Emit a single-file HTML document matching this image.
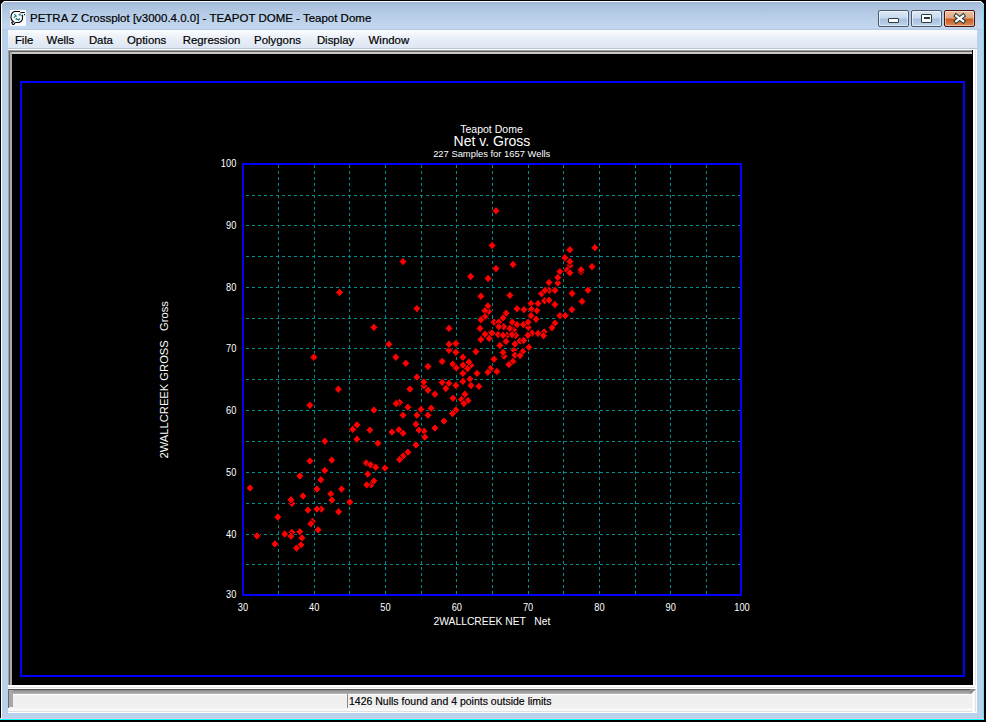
<!DOCTYPE html>
<html><head><meta charset="utf-8"><style>
*{margin:0;padding:0;box-sizing:border-box}
html,body{width:986px;height:722px;overflow:hidden;background:#000}
body{position:relative;font-family:"Liberation Sans",sans-serif}
.abs{position:absolute}
#frame{left:0;top:0;width:984px;height:720px;background:#b9d1ea;border-left:1px solid #000;border-top:1px solid #000}
#tbtxt{left:30px;top:10px;font-size:11.5px;color:#000;white-space:nowrap;line-height:17px;-webkit-text-stroke:0.2px #000}
#menu{left:8px;top:30px;width:969px;height:18px;background:linear-gradient(#fbfcfe,#e9eff8 50%,#dde6f3)}
.mi{position:absolute;top:1.6px;font-size:11.4px;color:#000;line-height:17px;white-space:nowrap;-webkit-text-stroke:0.2px #000}
#client{left:8px;top:49px;width:969px;height:640px;background:#000}
#status{left:8px;top:689px;width:969px;height:23px;background:#f0f0f0}
</style></head><body>
<div class="abs" id="frame"></div>
<div class="abs" style="left:1px;top:2px;width:983px;height:28px;background:linear-gradient(#9db6d3 0px,#a9c0dc 3px,#b6cce6 12px,#bdd3ec 20px,#c3d8ef 26px,#b0c8e4 28px)"></div>
<div class="abs" style="left:1px;top:1px;width:983px;height:1px;background:#fff"></div>
<div class="abs" style="left:1px;top:1px;width:1px;height:718px;background:#fff"></div>
<div class="abs" style="left:983px;top:1px;width:1px;height:719px;background:#6fd7f0"></div>
<div class="abs" style="left:0;top:718px;width:984px;height:1px;background:#e8c8d8"></div>
<div class="abs" style="left:0;top:719px;width:984px;height:1px;background:#00ffff"></div>
<div class="abs" style="left:10px;top:10px;width:16px;height:16px;background:#fbfbfb"></div>
<svg class="abs" style="left:10px;top:10px" width="16" height="16" viewBox="0 0 16 16">
<path d="M10 1.5H4.5L2.6 2.5L1.4 4.5L0.9 7.5L1.6 10L3.6 11.8L1.7 12.6L2.7 14.5H3.9L4.8 13L6 12.4H9.2L11.2 11.3L12.4 9.3L12.6 4.8M10.3 3L12 2.4H14.8M14.6 4V5.2" fill="none" stroke="#000" stroke-width="1.05"/>
<path d="M4.2 4.2L6.2 6.2L3.6 7.4M7.2 8.2L5.6 9.2M8.5 4.8H10.8M9.8 3.8V5.5M6.2 8.8L8.4 10L9.8 8.5M11 5.5L12.6 6" fill="none" stroke="#0a7a7a" stroke-width="1.1"/>
</svg>
<svg class="abs" style="left:0;top:0" width="986" height="8"><path d="M0 0H5L0 5Z" fill="#000"/><path d="M4.5 1.5L1.5 4.5" stroke="#fff" stroke-width="1"/><path d="M986 0H980L986 6Z" fill="#000"/><path d="M980.5 1.5L983.5 4.5" stroke="#fff" stroke-width="1"/></svg>
<div class="abs" id="tbtxt">PETRA Z Crossplot [v3000.4.0.0] - TEAPOT DOME - Teapot Dome</div>
<div class="abs" id="menu"><span class="mi" style="left:6.9px">File</span><span class="mi" style="left:38.6px">Wells</span><span class="mi" style="left:80.9px">Data</span><span class="mi" style="left:119.0px">Options</span><span class="mi" style="left:174.7px">Regression</span><span class="mi" style="left:246.1px">Polygons</span><span class="mi" style="left:308.9px">Display</span><span class="mi" style="left:360.6px">Window</span></div>
<div class="abs" style="left:8px;top:48px;width:969px;height:1px;background:#b8c4d4"></div>
<div class="abs" id="client"></div>
<div class="abs" style="left:8px;top:49px;width:969px;height:1px;background:#fff"></div>
<div class="abs" style="left:8px;top:50px;width:964px;height:1px;background:#a0a0a0"></div>
<div class="abs" style="left:8px;top:51px;width:964px;height:1px;background:#606060"></div>
<div class="abs" style="left:10px;top:52px;width:962px;height:2px;background:#c8c8c8"></div>
<div class="abs" style="left:8px;top:50px;width:1px;height:635px;background:#a0a0a0"></div>
<div class="abs" style="left:9px;top:51px;width:1px;height:634px;background:#646464"></div>
<div class="abs" style="left:10px;top:52px;width:2px;height:633px;background:#aaaaaa"></div>
<div class="abs" style="left:973px;top:50px;width:4px;height:639px;background:#fff"></div>
<div class="abs" style="left:975px;top:50px;width:1px;height:639px;background:#e4e4e4"></div>
<div class="abs" style="left:8px;top:685px;width:969px;height:4px;background:#fff"></div>
<div class="abs" style="left:8px;top:687px;width:967px;height:1px;background:#e4e4e4"></div>
<div class="abs" id="status"></div>
<div class="abs" style="left:8px;top:689px;width:963px;height:1px;background:#555"></div>
<div class="abs" style="left:8px;top:690px;width:962px;height:4px;background:linear-gradient(#8c8c8c,#b4b4b4)"></div>
<div class="abs" style="left:8px;top:689px;width:1px;height:19px;background:#6a6a6a"></div><div class="abs" style="left:9px;top:690px;width:4px;height:17px;background:#a8a8a8"></div>
<div class="abs" style="left:13px;top:694px;width:959px;height:1px;background:#fff"></div>
<div class="abs" style="left:8px;top:708px;width:969px;height:4px;background:#f8f8f8"></div>
<div class="abs" style="left:8px;top:711px;width:969px;height:1px;background:#e0e0e0"></div>
<div class="abs" style="left:8px;top:712px;width:969px;height:1px;background:#fff"></div>
<div class="abs" style="left:972px;top:689px;width:5px;height:23px;background:#fafafa"></div><div class="abs" style="left:975px;top:689px;width:1px;height:23px;background:#e2e2e2"></div>
<svg class="abs" style="left:970px;top:689px" width="6" height="5"><path d="M0 0H6L1 5H0Z" fill="#8c8c8c"/></svg>
<div class="abs" style="left:347px;top:694px;width:1px;height:14px;background:#8a8a8a"></div>
<div class="abs" style="left:349px;top:694px;font-size:10.5px;line-height:14px;color:#000;white-space:nowrap;-webkit-text-stroke:0.15px #000">1426 Nulls found and 4 points outside limits</div>
<svg class="abs" style="left:0;top:0" width="986" height="722">
<path d="M278.5 165V594 M314.5 165V594 M349.5 165V594 M385.5 165V594 M421.5 165V594 M456.5 165V594 M492.5 165V594 M528.5 165V594 M563.5 165V594 M599.5 165V594 M635.5 165V594 M670.5 165V594 M706.5 165V594" stroke="#008e90" stroke-width="1" stroke-dasharray="3 3" fill="none" shape-rendering="crispEdges"/>
<path d="M244 195.5H740 M244 225.5H740 M244 256.5H740 M244 287.5H740 M244 318.5H740 M244 348.5H740 M244 379.5H740 M244 410.5H740 M244 441.5H740 M244 472.5H740 M244 503.5H740 M244 534.5H740 M244 564.5H740" stroke="#008e90" stroke-width="1" stroke-dasharray="3 3" stroke-dashoffset="4" fill="none" shape-rendering="crispEdges"/>
<rect x="21" y="82" width="943" height="594" fill="none" stroke="#0000ff" stroke-width="2" shape-rendering="crispEdges"/>
<rect x="243" y="164" width="498" height="431" fill="none" stroke="#0000ff" stroke-width="2" shape-rendering="crispEdges"/>
<g fill="#ff0000" stroke="#000" stroke-width="0.9"><path d="M291.9 499.2L295.8 503.4L291.9 507.6L288.0 503.4Z"/><path d="M321.4 504.9L325.3 509.1L321.4 513.3L317.5 509.1Z"/><path d="M312.3 517.2L316.2 521.4L312.3 525.6L308.4 521.4Z"/><path d="M291.9 528.2L295.8 532.4L291.9 536.6L288.0 532.4Z"/><path d="M399.6 398.3L403.5 402.5L399.6 406.7L395.7 402.5Z"/><path d="M424.1 427.0L428.0 431.2L424.1 435.4L420.2 431.2Z"/><path d="M371.2 480.6L375.1 484.8L371.2 489.0L367.3 484.8Z"/><path d="M423.8 381.7L427.7 385.9L423.8 390.1L419.9 385.9Z"/><path d="M470.9 361.2L474.8 365.4L470.9 369.6L467.0 365.4Z"/><path d="M490.5 364.4L494.4 368.6L490.5 372.8L486.6 368.6Z"/><path d="M461.5 395.3L465.4 399.5L461.5 403.7L457.6 399.5Z"/><path d="M468.0 396.4L471.9 400.6L468.0 404.8L464.1 400.6Z"/><path d="M504.1 352.0L508.0 356.2L504.1 360.4L500.2 356.2Z"/><path d="M522.7 347.3L526.6 351.5L522.7 355.7L518.8 351.5Z"/><path d="M488.8 307.2L492.7 311.4L488.8 315.6L484.9 311.4Z"/><path d="M489.5 329.7L493.4 333.9L489.5 338.1L485.6 333.9Z"/><path d="M494.0 318.0L497.9 322.2L494.0 326.4L490.1 322.2Z"/><path d="M498.8 318.0L502.7 322.2L498.8 326.4L494.9 322.2Z"/><path d="M503.7 322.5L507.6 326.7L503.7 330.9L499.8 326.7Z"/><path d="M528.2 323.2L532.1 327.4L528.2 331.6L524.3 327.4Z"/><path d="M513.7 325.9L517.6 330.1L513.7 334.3L509.8 330.1Z"/><path d="M498.1 330.4L502.0 334.6L498.1 338.8L494.2 334.6Z"/><path d="M507.1 331.1L511.0 335.3L507.1 339.5L503.2 335.3Z"/><path d="M515.8 331.1L519.7 335.3L515.8 339.5L511.9 335.3Z"/><path d="M519.9 336.7L523.8 340.9L519.9 345.1L516.0 340.9Z"/><path d="M532.1 329.0L536.0 333.2L532.1 337.4L528.2 333.2Z"/><path d="M544.5 296.6L548.4 300.8L544.5 305.0L540.6 300.8Z"/><path d="M544.2 327.7L548.1 331.9L544.2 336.1L540.3 331.9Z"/><path d="M569.9 261.3L573.8 265.5L569.9 269.7L566.0 265.5Z"/><path d="M567.2 265.8L571.1 270.0L567.2 274.2L563.3 270.0Z"/><path d="M581.0 267.6L584.9 271.8L581.0 276.0L577.1 271.8Z"/><path d="M557.8 278.8L561.7 283.0L557.8 287.2L553.9 283.0Z"/><path d="M549.2 286.2L553.1 290.4L549.2 294.6L545.3 290.4Z"/><path d="M541.5 289.5L545.4 293.7L541.5 297.9L537.6 293.7Z"/><path d="M250.0 483.8L253.9 488.0L250.0 492.2L246.1 488.0Z"/><path d="M299.8 471.8L303.7 476.0L299.8 480.2L295.9 476.0Z"/><path d="M324.8 466.2L328.7 470.4L324.8 474.6L320.9 470.4Z"/><path d="M320.8 475.6L324.7 479.8L320.8 484.0L316.9 479.8Z"/><path d="M316.9 484.9L320.8 489.1L316.9 493.3L313.0 489.1Z"/><path d="M303.0 491.8L306.9 496.0L303.0 500.2L299.1 496.0Z"/><path d="M291.0 495.6L294.9 499.8L291.0 504.0L287.1 499.8Z"/><path d="M330.7 489.8L334.6 494.0L330.7 498.2L326.8 494.0Z"/><path d="M341.5 484.9L345.4 489.1L341.5 493.3L337.6 489.1Z"/><path d="M331.9 495.9L335.8 500.1L331.9 504.3L328.0 500.1Z"/><path d="M307.9 505.9L311.8 510.1L307.9 514.3L304.0 510.1Z"/><path d="M316.9 504.9L320.8 509.1L316.9 513.3L313.0 509.1Z"/><path d="M338.6 507.6L342.5 511.8L338.6 516.0L334.7 511.8Z"/><path d="M277.8 512.9L281.7 517.1L277.8 521.3L273.9 517.1Z"/><path d="M310.9 519.5L314.8 523.7L310.9 527.9L307.0 523.7Z"/><path d="M318.0 525.6L321.9 529.8L318.0 534.0L314.1 529.8Z"/><path d="M256.9 531.7L260.8 535.9L256.9 540.1L253.0 535.9Z"/><path d="M284.7 529.8L288.6 534.0L284.7 538.2L280.8 534.0Z"/><path d="M291.0 532.0L294.9 536.2L291.0 540.4L287.1 536.2Z"/><path d="M299.8 527.6L303.7 531.8L299.8 536.0L295.9 531.8Z"/><path d="M301.9 533.7L305.8 537.9L301.9 542.1L298.0 537.9Z"/><path d="M274.9 539.7L278.8 543.9L274.9 548.1L271.0 543.9Z"/><path d="M301.0 540.7L304.9 544.9L301.0 549.1L297.1 544.9Z"/><path d="M296.5 543.9L300.4 548.1L296.5 552.3L292.6 548.1Z"/><path d="M349.8 497.9L353.7 502.1L349.8 506.3L345.9 502.1Z"/><path d="M338.3 385.0L342.2 389.2L338.3 393.4L334.4 389.2Z"/><path d="M309.9 401.1L313.8 405.3L309.9 409.5L306.0 405.3Z"/><path d="M324.8 437.0L328.7 441.2L324.8 445.4L320.9 441.2Z"/><path d="M309.9 456.8L313.8 461.0L309.9 465.2L306.0 461.0Z"/><path d="M331.7 455.9L335.6 460.1L331.7 464.3L327.8 460.1Z"/><path d="M339.5 288.3L343.4 292.5L339.5 296.7L335.6 292.5Z"/><path d="M313.8 353.1L317.7 357.3L313.8 361.5L309.9 357.3Z"/><path d="M396.1 399.3L400.0 403.5L396.1 407.7L392.2 403.5Z"/><path d="M407.9 403.0L411.8 407.2L407.9 411.4L404.0 407.2Z"/><path d="M373.9 405.9L377.8 410.1L373.9 414.3L370.0 410.1Z"/><path d="M421.0 405.2L424.9 409.4L421.0 413.6L417.1 409.4Z"/><path d="M431.1 404.1L435.0 408.3L431.1 412.5L427.2 408.3Z"/><path d="M403.0 411.0L406.9 415.2L403.0 419.4L399.1 415.2Z"/><path d="M416.9 411.0L420.8 415.2L416.9 419.4L413.0 415.2Z"/><path d="M428.0 411.0L431.9 415.2L428.0 419.4L424.1 415.2Z"/><path d="M356.9 420.7L360.8 424.9L356.9 429.1L353.0 424.9Z"/><path d="M352.7 425.2L356.6 429.4L352.7 433.6L348.8 429.4Z"/><path d="M369.8 425.9L373.7 430.1L369.8 434.3L365.9 430.1Z"/><path d="M391.9 427.9L395.8 432.1L391.9 436.3L388.0 432.1Z"/><path d="M398.9 425.6L402.8 429.8L398.9 434.0L395.0 429.8Z"/><path d="M403.0 429.0L406.9 433.2L403.0 437.4L399.1 433.2Z"/><path d="M415.9 420.0L419.8 424.2L415.9 428.4L412.0 424.2Z"/><path d="M418.9 425.9L422.8 430.1L418.9 434.3L415.0 430.1Z"/><path d="M434.9 423.9L438.8 428.1L434.9 432.3L431.0 428.1Z"/><path d="M424.9 432.9L428.8 437.1L424.9 441.3L421.0 437.1Z"/><path d="M356.9 435.0L360.8 439.2L356.9 443.4L353.0 439.2Z"/><path d="M377.8 439.0L381.7 443.2L377.8 447.4L373.9 443.2Z"/><path d="M415.9 440.8L419.8 445.0L415.9 449.2L412.0 445.0Z"/><path d="M407.9 448.0L411.8 452.2L407.9 456.4L404.0 452.2Z"/><path d="M403.0 451.9L406.9 456.1L403.0 460.3L399.1 456.1Z"/><path d="M399.6 455.4L403.5 459.6L399.6 463.8L395.7 459.6Z"/><path d="M366.3 458.8L370.2 463.0L366.3 467.2L362.4 463.0Z"/><path d="M370.5 460.6L374.4 464.8L370.5 469.0L366.6 464.8Z"/><path d="M375.7 463.0L379.6 467.2L375.7 471.4L371.8 467.2Z"/><path d="M385.0 463.9L388.9 468.1L385.0 472.3L381.1 468.1Z"/><path d="M367.7 469.9L371.6 474.1L367.7 478.3L363.8 474.1Z"/><path d="M373.9 476.8L377.8 481.0L373.9 485.2L370.0 481.0Z"/><path d="M366.7 480.7L370.6 484.9L366.7 489.1L362.8 484.9Z"/><path d="M416.9 304.4L420.8 308.6L416.9 312.8L413.0 308.6Z"/><path d="M373.9 323.2L377.8 327.4L373.9 331.6L370.0 327.4Z"/><path d="M388.9 340.1L392.8 344.3L388.9 348.5L385.0 344.3Z"/><path d="M395.8 353.0L399.7 357.2L395.8 361.4L391.9 357.2Z"/><path d="M405.8 359.1L409.7 363.3L405.8 367.5L401.9 363.3Z"/><path d="M428.0 362.3L431.9 366.5L428.0 370.7L424.1 366.5Z"/><path d="M416.9 372.9L420.8 377.1L416.9 381.3L413.0 377.1Z"/><path d="M423.8 377.8L427.7 382.0L423.8 386.2L419.9 382.0Z"/><path d="M409.9 384.9L413.8 389.1L409.9 393.3L406.0 389.1Z"/><path d="M428.0 386.1L431.9 390.3L428.0 394.5L424.1 390.3Z"/><path d="M434.9 390.0L438.8 394.2L434.9 398.4L431.0 394.2Z"/><path d="M403.0 257.4L406.9 261.6L403.0 265.8L399.1 261.6Z"/><path d="M463.9 399.3L467.8 403.5L463.9 407.7L460.0 403.5Z"/><path d="M455.9 405.8L459.8 410.0L455.9 414.2L452.0 410.0Z"/><path d="M452.5 409.4L456.4 413.6L452.5 417.8L448.6 413.6Z"/><path d="M443.9 416.9L447.8 421.1L443.9 425.3L440.0 421.1Z"/><path d="M449.0 346.1L452.9 350.3L449.0 354.5L445.1 350.3Z"/><path d="M455.9 348.1L459.8 352.3L455.9 356.5L452.0 352.3Z"/><path d="M475.9 347.4L479.8 351.6L475.9 355.8L472.0 351.6Z"/><path d="M462.9 353.1L466.8 357.3L462.9 361.5L459.0 357.3Z"/><path d="M442.1 357.2L446.0 361.4L442.1 365.6L438.2 361.4Z"/><path d="M452.8 360.0L456.7 364.2L452.8 368.4L448.9 364.2Z"/><path d="M456.3 363.7L460.2 367.9L456.3 372.1L452.4 367.9Z"/><path d="M462.9 361.0L466.8 365.2L462.9 369.4L459.0 365.2Z"/><path d="M468.9 357.9L472.8 362.1L468.9 366.3L465.0 362.1Z"/><path d="M467.4 364.5L471.3 368.7L467.4 372.9L463.5 368.7Z"/><path d="M462.9 369.2L466.8 373.4L462.9 377.6L459.0 373.4Z"/><path d="M477.0 369.2L480.9 373.4L477.0 377.6L473.1 373.4Z"/><path d="M487.9 368.1L491.8 372.3L487.9 376.5L484.0 372.3Z"/><path d="M442.1 378.2L446.0 382.4L442.1 386.6L438.2 382.4Z"/><path d="M448.9 379.1L452.8 383.3L448.9 387.5L445.0 383.3Z"/><path d="M445.9 384.3L449.8 388.5L445.9 392.7L442.0 388.5Z"/><path d="M455.9 381.3L459.8 385.5L455.9 389.7L452.0 385.5Z"/><path d="M462.9 377.2L466.8 381.4L462.9 385.6L459.0 381.4Z"/><path d="M469.9 374.9L473.8 379.1L469.9 383.3L466.0 379.1Z"/><path d="M471.0 381.3L474.9 385.5L471.0 389.7L467.1 385.5Z"/><path d="M478.9 382.2L482.8 386.4L478.9 390.6L475.0 386.4Z"/><path d="M464.9 390.1L468.8 394.3L464.9 398.5L461.0 394.3Z"/><path d="M453.0 394.0L456.9 398.2L453.0 402.4L449.1 398.2Z"/><path d="M503.0 348.2L506.9 352.4L503.0 356.6L499.1 352.4Z"/><path d="M514.0 346.0L517.9 350.2L514.0 354.4L510.1 350.2Z"/><path d="M514.9 351.0L518.8 355.2L514.9 359.4L511.0 355.2Z"/><path d="M520.1 351.3L524.0 355.5L520.1 359.7L516.2 355.5Z"/><path d="M494.0 355.1L497.9 359.3L494.0 363.5L490.1 359.3Z"/><path d="M513.0 357.2L516.9 361.4L513.0 365.6L509.1 361.4Z"/><path d="M508.9 360.3L512.8 364.5L508.9 368.7L505.0 364.5Z"/><path d="M496.9 367.3L500.8 371.5L496.9 375.7L493.0 371.5Z"/><path d="M487.8 301.7L491.7 305.9L487.8 310.1L483.9 305.9Z"/><path d="M484.9 306.5L488.8 310.7L484.9 314.9L481.0 310.7Z"/><path d="M485.0 312.4L488.9 316.6L485.0 320.8L481.1 316.6Z"/><path d="M480.9 315.5L484.8 319.7L480.9 323.9L477.0 319.7Z"/><path d="M449.0 324.2L452.9 328.4L449.0 332.6L445.1 328.4Z"/><path d="M480.0 324.2L483.9 328.4L480.0 332.6L476.1 328.4Z"/><path d="M485.0 330.1L488.9 334.3L485.0 338.5L481.1 334.3Z"/><path d="M480.9 335.3L484.8 339.5L480.9 343.7L477.0 339.5Z"/><path d="M489.2 334.2L493.1 338.4L489.2 342.6L485.3 338.4Z"/><path d="M449.0 340.1L452.9 344.3L449.0 348.5L445.1 344.3Z"/><path d="M455.9 339.3L459.8 343.5L455.9 347.7L452.0 343.5Z"/><path d="M506.1 309.0L510.0 313.2L506.1 317.4L502.2 313.2Z"/><path d="M503.0 313.7L506.9 317.9L503.0 322.1L499.1 317.9Z"/><path d="M517.0 304.5L520.9 308.7L517.0 312.9L513.1 308.7Z"/><path d="M524.0 305.4L527.9 309.6L524.0 313.8L520.1 309.6Z"/><path d="M531.0 299.3L534.9 303.5L531.0 307.7L527.1 303.5Z"/><path d="M531.4 305.1L535.3 309.3L531.4 313.5L527.5 309.3Z"/><path d="M531.0 311.4L534.9 315.6L531.0 319.8L527.1 315.6Z"/><path d="M498.8 322.5L502.7 326.7L498.8 330.9L494.9 326.7Z"/><path d="M512.3 318.0L516.2 322.2L512.3 326.4L508.4 322.2Z"/><path d="M517.0 320.4L520.9 324.6L517.0 328.8L513.1 324.6Z"/><path d="M523.4 320.4L527.3 324.6L523.4 328.8L519.5 324.6Z"/><path d="M528.1 318.0L532.0 322.2L528.1 326.4L524.2 322.2Z"/><path d="M509.9 324.2L513.8 328.4L509.9 332.6L506.0 328.4Z"/><path d="M491.9 328.7L495.8 332.9L491.9 337.1L488.0 332.9Z"/><path d="M503.0 331.1L506.9 335.3L503.0 339.5L499.1 335.3Z"/><path d="M512.0 330.4L515.9 334.6L512.0 338.8L508.1 334.6Z"/><path d="M506.1 337.2L510.0 341.4L506.1 345.6L502.2 341.4Z"/><path d="M499.9 341.2L503.8 345.4L499.9 349.6L496.0 345.4Z"/><path d="M514.9 339.8L518.8 344.0L514.9 348.2L511.0 344.0Z"/><path d="M523.7 336.3L527.6 340.5L523.7 344.7L519.8 340.5Z"/><path d="M527.9 331.1L531.8 335.3L527.9 339.5L524.0 335.3Z"/><path d="M528.9 343.1L532.8 347.3L528.9 351.5L525.0 347.3Z"/><path d="M538.0 299.4L541.9 303.6L538.0 307.8L534.1 303.6Z"/><path d="M536.9 306.4L540.8 310.6L536.9 314.8L533.0 310.6Z"/><path d="M536.1 315.0L540.0 319.2L536.1 323.4L532.2 319.2Z"/><path d="M549.0 296.0L552.9 300.2L549.0 304.4L545.1 300.2Z"/><path d="M554.9 300.3L558.8 304.5L554.9 308.7L551.0 304.5Z"/><path d="M571.9 305.4L575.8 309.6L571.9 313.8L568.0 309.6Z"/><path d="M559.9 311.4L563.8 315.6L559.9 319.8L556.0 315.6Z"/><path d="M565.3 311.4L569.2 315.6L565.3 319.8L561.4 315.6Z"/><path d="M554.9 319.0L558.8 323.2L554.9 327.4L551.0 323.2Z"/><path d="M552.0 323.5L555.9 327.7L552.0 331.9L548.1 327.7Z"/><path d="M538.0 329.3L541.9 333.5L538.0 337.7L534.1 333.5Z"/><path d="M543.5 331.5L547.4 335.7L543.5 339.9L539.6 335.7Z"/><path d="M513.0 260.3L516.9 264.5L513.0 268.7L509.1 264.5Z"/><path d="M496.0 264.4L499.9 268.6L496.0 272.8L492.1 268.6Z"/><path d="M488.0 274.3L491.9 278.5L488.0 282.7L484.1 278.5Z"/><path d="M509.9 291.2L513.8 295.4L509.9 299.6L506.0 295.4Z"/><path d="M470.7 272.3L474.6 276.5L470.7 280.7L466.8 276.5Z"/><path d="M480.9 292.1L484.8 296.3L480.9 300.5L477.0 296.3Z"/><path d="M496.0 206.6L499.9 210.8L496.0 215.0L492.1 210.8Z"/><path d="M492.1 241.3L496.0 245.5L492.1 249.7L488.2 245.5Z"/><path d="M569.9 245.5L573.8 249.7L569.9 253.9L566.0 249.7Z"/><path d="M564.9 253.5L568.8 257.7L564.9 261.9L561.0 257.7Z"/><path d="M569.9 257.4L573.8 261.6L569.9 265.8L566.0 261.6Z"/><path d="M569.9 268.6L573.8 272.8L569.9 277.0L566.0 272.8Z"/><path d="M581.0 265.5L584.9 269.7L581.0 273.9L577.1 269.7Z"/><path d="M559.9 267.4L563.8 271.6L559.9 275.8L556.0 271.6Z"/><path d="M557.8 273.3L561.7 277.5L557.8 281.7L553.9 277.5Z"/><path d="M549.0 278.3L552.9 282.5L549.0 286.7L545.1 282.5Z"/><path d="M545.0 286.2L548.9 290.4L545.0 294.6L541.1 290.4Z"/><path d="M555.0 286.2L558.9 290.4L555.0 294.6L551.1 290.4Z"/><path d="M588.0 286.1L591.9 290.3L588.0 294.5L584.1 290.3Z"/><path d="M592.0 262.4L595.9 266.6L592.0 270.8L588.1 266.6Z"/><path d="M594.9 243.5L598.8 247.7L594.9 251.9L591.0 247.7Z"/><path d="M572.1 289.3L576.0 293.5L572.1 297.7L568.2 293.5Z"/><path d="M582.0 297.2L585.9 301.4L582.0 305.6L578.1 301.4Z"/></g>
<text x="491.5" y="133" font-size="10.5" text-anchor="middle" font-family="Liberation Sans, sans-serif" fill="#fff">Teapot Dome</text>
<text x="492" y="145.7" font-size="14" text-anchor="middle" font-family="Liberation Sans, sans-serif" fill="#fff">Net v. Gross</text>
<text x="491.7" y="157" font-size="9.4" text-anchor="middle" font-family="Liberation Sans, sans-serif" fill="#fff">227 Samples for 1657 Wells</text>
<text transform="translate(236.3 598.0) scale(0.9 1)" font-size="10.3" text-anchor="end" font-family="Liberation Sans, sans-serif" fill="#fff">30</text>
<text transform="translate(236.3 538.0) scale(0.9 1)" font-size="10.3" text-anchor="end" font-family="Liberation Sans, sans-serif" fill="#fff">40</text>
<text transform="translate(236.3 476.0) scale(0.9 1)" font-size="10.3" text-anchor="end" font-family="Liberation Sans, sans-serif" fill="#fff">50</text>
<text transform="translate(236.3 414.0) scale(0.9 1)" font-size="10.3" text-anchor="end" font-family="Liberation Sans, sans-serif" fill="#fff">60</text>
<text transform="translate(236.3 352.0) scale(0.9 1)" font-size="10.3" text-anchor="end" font-family="Liberation Sans, sans-serif" fill="#fff">70</text>
<text transform="translate(236.3 291.0) scale(0.9 1)" font-size="10.3" text-anchor="end" font-family="Liberation Sans, sans-serif" fill="#fff">80</text>
<text transform="translate(236.3 229.0) scale(0.9 1)" font-size="10.3" text-anchor="end" font-family="Liberation Sans, sans-serif" fill="#fff">90</text>
<text transform="translate(236.3 167.0) scale(0.9 1)" font-size="10.3" text-anchor="end" font-family="Liberation Sans, sans-serif" fill="#fff">100</text>
<text transform="translate(242.9 611) scale(0.9 1)" font-size="10.3" text-anchor="middle" font-family="Liberation Sans, sans-serif" fill="#fff">30</text>
<text transform="translate(314.2 611) scale(0.9 1)" font-size="10.3" text-anchor="middle" font-family="Liberation Sans, sans-serif" fill="#fff">40</text>
<text transform="translate(385.5 611) scale(0.9 1)" font-size="10.3" text-anchor="middle" font-family="Liberation Sans, sans-serif" fill="#fff">50</text>
<text transform="translate(456.8 611) scale(0.9 1)" font-size="10.3" text-anchor="middle" font-family="Liberation Sans, sans-serif" fill="#fff">60</text>
<text transform="translate(528.1 611) scale(0.9 1)" font-size="10.3" text-anchor="middle" font-family="Liberation Sans, sans-serif" fill="#fff">70</text>
<text transform="translate(599.4 611) scale(0.9 1)" font-size="10.3" text-anchor="middle" font-family="Liberation Sans, sans-serif" fill="#fff">80</text>
<text transform="translate(670.7 611) scale(0.9 1)" font-size="10.3" text-anchor="middle" font-family="Liberation Sans, sans-serif" fill="#fff">90</text>
<text transform="translate(742.0 611) scale(0.9 1)" font-size="10.3" text-anchor="middle" font-family="Liberation Sans, sans-serif" fill="#fff">100</text>
<text x="491.9" y="624.7" font-size="10.3" text-anchor="middle" font-family="Liberation Sans, sans-serif" fill="#fff" xml:space="preserve">2WALLCREEK NET   Net</text>
<text transform="translate(167.9 379.8) rotate(-90)" x="0" y="0" font-size="11.2" text-anchor="middle" font-family="Liberation Sans, sans-serif" fill="#fff" xml:space="preserve">2WALLCREEK GROSS   Gross</text>
</svg>
<!-- caption buttons -->
<div class="abs" style="left:878px;top:10px;width:31px;height:17px;border:1px solid #4a5a6e;border-radius:2px;background:linear-gradient(#dce8f5,#c8daee 48%,#a8c0dc 52%,#bcd2ec);box-shadow:inset 0 0 0 1px rgba(255,255,255,0.55)"></div>
<div class="abs" style="left:888px;top:18px;width:11px;height:5px;border:1px solid #2a3a40;background:#fff;border-radius:1px"></div>
<div class="abs" style="left:911px;top:10px;width:31px;height:17px;border:1px solid #4a5a6e;border-radius:2px;background:linear-gradient(#dce8f5,#c8daee 48%,#a8c0dc 52%,#bcd2ec);box-shadow:inset 0 0 0 1px rgba(255,255,255,0.55)"></div>
<div class="abs" style="left:921px;top:14px;width:11px;height:9px;border:1px solid #2a3a40;background:#fff;border-radius:1px"></div>
<div class="abs" style="left:923.5px;top:17px;width:6px;height:2px;background:#2a3a40"></div>
<div class="abs" style="left:944px;top:10px;width:31px;height:17px;border:1px solid #4a1010;border-radius:2px;background:linear-gradient(#ecc0a0,#e0a882 48%,#c4581c 52%,#dc8c58);box-shadow:inset 0 0 0 1px rgba(255,255,255,0.45)"></div>
<svg class="abs" style="left:952px;top:12px" width="16" height="13" viewBox="0 0 16 13"><path d="M4.2 3.8L11.2 9.2M11.2 3.8L4.2 9.2" stroke="#1f3a3a" stroke-width="4.2" stroke-linecap="square"/><path d="M4.2 3.8L11.2 9.2M11.2 3.8L4.2 9.2" stroke="#fff" stroke-width="2.2" stroke-linecap="square"/></svg>
</body></html>
